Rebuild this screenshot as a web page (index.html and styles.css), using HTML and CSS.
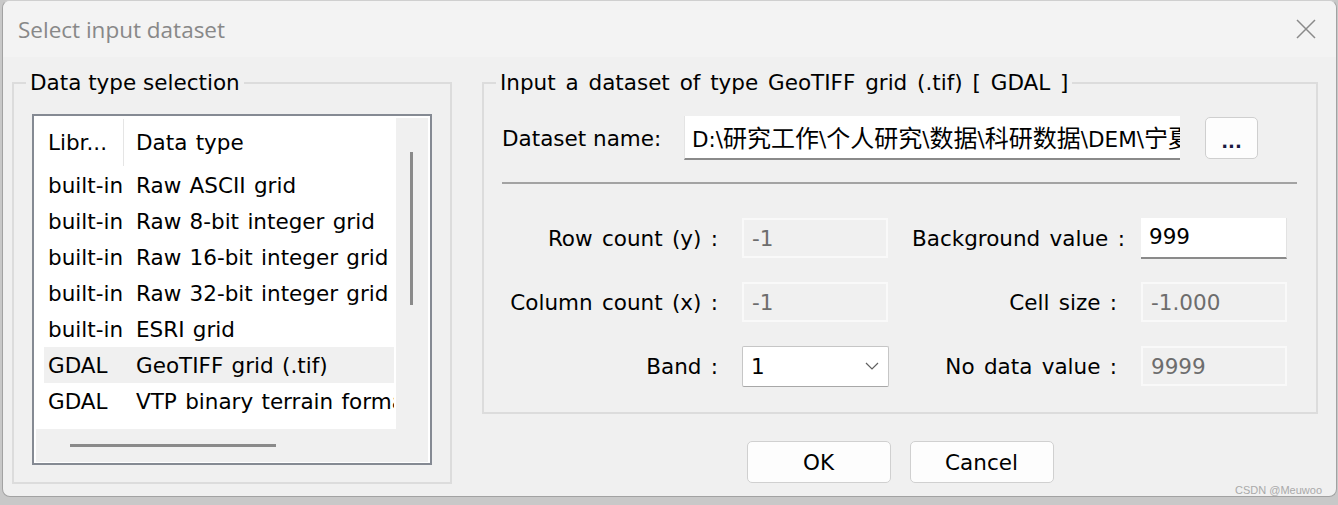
FILE: index.html
```html
<!DOCTYPE html>
<html lang="en">
<head>
  <meta charset="UTF-8" />
  <title>Select input dataset</title>
  <link rel="stylesheet" href="styles.css">
</head>
<body>
  <div class="window">
    <div class="titlebar">
      <span class="title">Select input dataset</span>
      <svg class="close" width="20" height="20" viewBox="0 0 20 20">
        <path d="M1 1L19 19M19 1L1 19" stroke="#8a8a8a" stroke-width="1.5" fill="none" />
      </svg>
    </div>

    <div class="body">
      <!-- data type list -->
      <fieldset class="group group-types">
        <legend>Data type selection</legend>
        <div class="listbox">
          <div class="list">
            <div class="row head"><span class="lib">Libr...</span><span class="type">Data type</span></div>
            <div class="row"><span class="lib">built-in</span><span class="type">Raw ASCII grid</span></div>
            <div class="row"><span class="lib">built-in</span><span class="type">Raw 8-bit integer grid</span></div>
            <div class="row"><span class="lib">built-in</span><span class="type">Raw 16-bit integer grid</span></div>
            <div class="row"><span class="lib">built-in</span><span class="type">Raw 32-bit integer grid</span></div>
            <div class="row"><span class="lib">built-in</span><span class="type">ESRI grid</span></div>
            <div class="row selected"><span class="lib">GDAL</span><span class="type">GeoTIFF grid (.tif)</span></div>
            <div class="row"><span class="lib">GDAL</span><span class="type">VTP binary terrain format</span></div>
            <div class="row"><span class="lib">GDAL</span><span class="type">Arc/Info ASCII grid (.asc)</span></div>
          </div>
          <div class="vscroll"><div class="thumb-v"></div></div>
          <div class="hscroll"><div class="thumb-h"></div></div>
        </div>
      </fieldset>

      <div class="right">
        <fieldset class="group group-input">
          <legend>Input a dataset of type GeoTIFF grid (.tif) [ GDAL ]</legend>
          <div class="name-row">
            <span class="name-label">Dataset name:</span>
            <div class="path">D:\<span class="cjk">研究工作</span>\<span class="cjk">个人研究</span>\<span class="cjk">数据</span>\<span class="cjk">科研数据</span>\DEM\<span class="cjk">宁夏</span>\dem.tif</div>
            <button type="button" class="browse">...</button>
          </div>
          <div class="separator"></div>
          <div class="props">
            <span class="prop-label">Row count (y) :</span>
            <div class="field disabled">-1</div>
            <span class="prop-label">Background value :</span>
            <div class="field edit">999</div>

            <span class="prop-label">Column count (x) :</span>
            <div class="field disabled">-1</div>
            <span class="prop-label">Cell size :</span>
            <div class="field disabled">-1.000</div>

            <span class="prop-label">Band :</span>
            <div class="combo">
              <span>1</span>
              <svg width="14" height="8" viewBox="0 0 14 8"><path d="M1 1L7 7L13 1" stroke="#606060" stroke-width="1.2" fill="none" /></svg>
            </div>
            <span class="prop-label">No data value :</span>
            <div class="field disabled">9999</div>
          </div>
        </fieldset>

        <div class="buttons">
          <button type="button" class="btn">OK</button>
          <button type="button" class="btn">Cancel</button>
        </div>
      </div>
    </div>

    <div class="watermark">CSDN @Meuwoo</div>
  </div>
</body>
</html>
```

FILE: styles.css
```css
body {
  margin: 0;
  background: #c8c8c8;
  font-family: "DejaVu Sans", "Noto Sans CJK SC", sans-serif;
  font-size: 21.5px;
  color: #000;
}
.window {
  position: relative;
  box-sizing: border-box;
  width: 1335px;
  height: 497px;
  margin-left: 2px;
  background: #f0f0f0;
  border: 1px solid #a2a2a2;
  border-top-color: #cfcfcf;
  border-radius: 8px;
  overflow: hidden;
}
.titlebar {
  height: 56px;
  background: #f3f3f3;
  display: flex;
  align-items: center;
  justify-content: space-between;
  padding: 0 20px 0 15px;
}
.title {
  font-family: "Open Sans", sans-serif;
  font-size: 22.5px;
  color: #888888;
}
.close {
  display: block;
}
.body {
  display: flex;
  gap: 30px;
  padding: 13px 0 0 9px;
}
.group {
  margin: 0;
  min-width: 0;
  border: 2px solid #dcdcdc;
}
.group legend {
  margin-left: -6px;
  padding: 0 4px;
  line-height: 26px;
}
.group-types {
  width: 440px;
  box-sizing: border-box;
  padding: 18px 16px 17px 18px;
}
.listbox {
  box-sizing: border-box;
  width: 400px;
  height: 351px;
  border: 2px solid #858a93;
  background: #fff;
  padding: 2px 2px 1px 2px;
  display: grid;
  grid-template-columns: 360px 32px;
  grid-template-rows: 311px 33px;
}
.list {
  overflow: hidden;
}
.row {
  width: 350px;
  margin-left: 8px;
  height: 36px;
  display: flex;
  align-items: center;
  white-space: nowrap;
  overflow: hidden;
  word-spacing: 1.5px;
}
.row.head {
  height: 49px;
}
.row.selected {
  background: #f0f0f0;
}
.lib {
  box-sizing: border-box;
  flex: 0 0 80px;
  padding-left: 4px;
}
.type {
  padding-left: 12px;
}
.head .lib {
  border-right: 1px solid #e5e5e5;
  line-height: 47px;
}
.vscroll {
  background: #f0f0f0;
  padding: 34px 0 0 14px;
}
.thumb-v {
  width: 3px;
  height: 153px;
  background: #8a8a8a;
}
.hscroll {
  grid-column: 1 / 3;
  background: #f0f0f0;
  padding: 15px 0 0 34px;
}
.thumb-h {
  width: 206px;
  height: 3px;
  background: #8a8a8a;
}
.right {
  display: flex;
  flex-direction: column;
  width: 836px;
}
.group-input {
  padding: 20px 19px 26px 18px;
}
.group-input legend {
  word-spacing: 3px;
}
.name-row {
  display: flex;
  align-items: center;
  height: 44px;
}
.name-label {
  width: 182px;
  flex: 0 0 182px;
}
.path {
  box-sizing: border-box;
  width: 496px;
  height: 44px;
  background: #fff;
  border-left: 1px solid #e4e4e4;
  border-bottom: 2px solid #8a8a8a;
  padding: 0 0 0 7px;
  line-height: 42px;
  white-space: nowrap;
  overflow: hidden;
}
.cjk {
  font-family: "Noto Sans CJK SC", sans-serif;
  font-size: 24px;
}
.browse {
  box-sizing: border-box;
  width: 53px;
  height: 42px;
  margin-left: 25px;
  background: #fdfdfd;
  border: 1px solid #cfcfcf;
  border-radius: 5px;
  font-family: "DejaVu Sans", sans-serif;
  font-size: 18px;
  line-height: 20px;
  font-weight: bold;
  color: #1a1a40;
  padding: 8px 0 0;
}
.separator {
  margin-top: 22px;
  border-top: 2px solid #a3a3a3;
}
.props {
  margin-top: 34px;
  display: grid;
  grid-template-columns: 216px 146px 205px 146px;
  grid-auto-rows: 40px;
  column-gap: 24px;
  row-gap: 24px;
  align-items: center;
}
.prop-label {
  text-align: right;
  white-space: nowrap;
  word-spacing: 2.5px;
}
.field {
  box-sizing: border-box;
  height: 40px;
  padding-left: 8px;
  line-height: 38px;
}
.field.disabled {
  background: #f0f0f0;
  border: 2px solid #f9f9f9;
  color: #6d6d6d;
}
.field.edit {
  background: #fff;
  border-right: 1px solid #e2e2e2;
  border-bottom: 2px solid #8a8a8a;
  height: 41px;
}
.combo {
  box-sizing: border-box;
  width: 147px;
  height: 41px;
  background: #fff;
  border: 1px solid #c6c6c6;
  border-bottom-color: #a8a8a8;
  border-radius: 2px;
  display: flex;
  align-items: center;
  justify-content: space-between;
  padding: 0 9px 0 8px;
}
.buttons {
  display: flex;
  justify-content: center;
  gap: 19px;
  margin-top: 27px;
}
.btn {
  box-sizing: border-box;
  width: 144px;
  height: 42px;
  background: #fdfdfd;
  border: 1px solid #d0d0d0;
  border-radius: 5px;
  font-family: "DejaVu Sans", sans-serif;
  font-size: 21.5px;
  color: #000;
}
.watermark {
  position: absolute;
  right: 14px;
  bottom: 0;
  font-family: "Liberation Sans", sans-serif;
  font-size: 11px;
  color: #aaaaaa;
}
```
